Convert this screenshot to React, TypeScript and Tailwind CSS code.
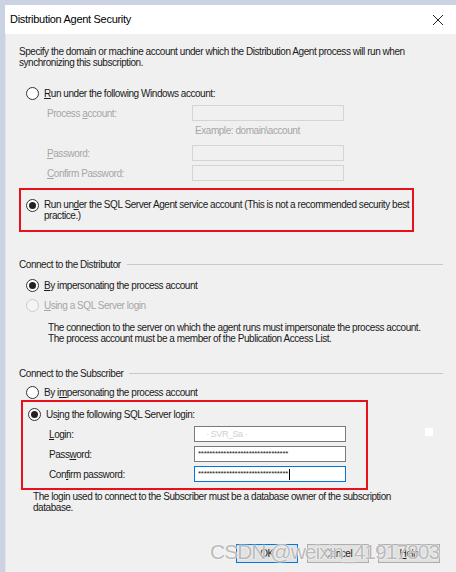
import React from "react";

const Radio = ({ checked = false, disabled = false }: { checked?: boolean; disabled?: boolean }) => (
  <span
    className={`flex h-[13px] w-[13px] shrink-0 items-center justify-center rounded-full border ${
      disabled ? "border-[#cccccc] bg-[#f4f4f4]" : "border-[#333333] bg-white"
    }`}
  >
    {checked && <span className="h-[7px] w-[7px] rounded-full bg-[#222222]" />}
  </span>
);

const RadioRow = ({
  checked,
  disabled,
  children,
}: {
  checked?: boolean;
  disabled?: boolean;
  children: React.ReactNode;
}) => (
  <div className="flex h-[14px] items-center pl-[7px]">
    <Radio checked={checked} disabled={disabled} />
    <span className={`ml-[5px] ${disabled ? "text-[#a6a6a6]" : "text-[#1a1a1a]"}`}>{children}</span>
  </div>
);

const Field = ({
  label,
  disabled,
  focused,
  children,
}: {
  label: React.ReactNode;
  disabled?: boolean;
  focused?: boolean;
  children?: React.ReactNode;
}) => (
  <div className="flex h-[16px] items-center">
    <span className={`w-[173px] pl-[28px] ${disabled ? "text-[#a6a6a6]" : "text-[#1a1a1a]"}`}>{label}</span>
    <div
      className={`flex h-[16px] w-[152px] items-center overflow-hidden border px-[3px] ${
        disabled
          ? "border-[#d4d4d4] bg-[#f0f0f0]"
          : focused
          ? "border-[#0078d7] bg-white"
          : "border-[#7a7a7a] bg-white"
      }`}
    >
      {children}
    </div>
  </div>
);

const Stars = ({ caret }: { caret?: boolean }) => (
  <span className="flex items-center text-[8px] leading-none tracking-[-0.3px] text-[#222]">
    {"*".repeat(32)}
    {caret && <span className="ml-[1px] h-[11px] w-[1px] bg-black" />}
  </span>
);

const Button = ({ children, primary }: { children: React.ReactNode; primary?: boolean }) => (
  <div
    className={`flex h-[19px] w-[62px] items-center justify-center border ${
      primary ? "border-[#0078d7] bg-[#e1e1e1]" : "border-[#adadad] bg-[#e1e1e1]"
    }`}
  >
    {children}
  </div>
);

export default function App() {
  return (
    <div
      className="relative h-[572px] w-[456px] overflow-hidden bg-[#cbd3e3] pl-[5px] pt-[5px] text-[10px] leading-[11px] tracking-[-0.45px] text-[#1a1a1a]"
      style={{ fontFamily: '"Liberation Sans", Arial, sans-serif' }}
    >
      <div className="w-[460px]">
        <div className="flex h-[29px] items-center justify-between bg-white pl-[5px] pr-[21px]">
          <span className="text-[11px] tracking-[-0.3px] text-black">Distribution Agent Security</span>
          <svg width="12" height="12" viewBox="0 0 12 12">
            <path d="M1 1 L11 11 M11 1 L1 11" stroke="#222" strokeWidth="1" />
          </svg>
        </div>
        <div className="h-[540px] border-l border-[#e3e3e3] bg-[#f0f0f0] pl-[13px] pt-[12px]">
          <p className="whitespace-nowrap">
            Specify the domain or machine account under which the Distribution Agent process will run when
            <br />
            synchronizing this subscription.
          </p>

          <div className="mt-[18px]">
            <RadioRow>
              <u>R</u>un under the following Windows account:
            </RadioRow>
          </div>
          <div className="mt-[5px]">
            <Field
              disabled
              label={
                <>
                  Process <u>a</u>ccount:
                </>
              }
            />
          </div>
          <div className="mt-[4px] h-[12px] pl-[176px] text-[#a6a6a6]">Example: domain\account</div>
          <div className="mt-[8px]">
            <Field
              disabled
              label={
                <>
                  <u>P</u>assword:
                </>
              }
            />
          </div>
          <div className="mt-[4px]">
            <Field
              disabled
              label={
                <>
                  <u>C</u>onfirm Password:
                </>
              }
            />
          </div>

          <div className="mt-[7px] h-[44px] w-[395px] border-2 border-[#e8101a] pt-[9px]">
            <div className="flex pl-[5px]">
              <span>
                <Radio checked />
              </span>
              <span className="ml-[5px] whitespace-nowrap">
                Run un<u>d</u>er the SQL Server Agent service account (This is not a recommended security best
                <br />
                practice.)
              </span>
            </div>
          </div>

          <div className="mt-[27px] flex items-center pr-[22px]">
            <span>Connect to the Distributor</span>
            <span className="ml-[6px] h-[1px] flex-1 bg-[#c8c8c8]" />
          </div>
          <div className="mt-[8px]">
            <RadioRow checked>
              <u>B</u>y impersonating the process account
            </RadioRow>
          </div>
          <div className="mt-[6px]">
            <RadioRow disabled>
              <u>U</u>sing a SQL Server login
            </RadioRow>
          </div>
          <p className="mt-[10px] whitespace-nowrap pl-[29px]">
            The connection to the server on which the agent runs must impersonate the process account.
            <br />
            The process account must be a member of the Publication Access List.
          </p>

          <div className="mt-[24px] flex items-center pr-[22px]">
            <span>Connect to the Subscriber</span>
            <span className="ml-[6px] h-[1px] flex-1 bg-[#c8c8c8]" />
          </div>
          <div className="mt-[6px]">
            <RadioRow>
              By i<u>m</u>personating the process account
            </RadioRow>
          </div>

          <div className="mt-[1px] flex items-start">
            <div className="ml-[2px] h-[90px] w-[347px] border-2 border-[#e8101a] pt-[5px]">
              <div className="-ml-[2px]">
                <RadioRow checked>
                  Us<u>i</u>ng the following SQL Server login:
                </RadioRow>
              </div>
              <div className="-ml-[2px] mt-[5px]">
                <Field
                  label={
                    <>
                      <u>L</u>ogin:
                    </>
                  }
                >
                  <span className="text-[9px] text-[#cfcfcf]">&nbsp;&nbsp;&nbsp;&nbsp;· SVR_Sa ·</span>
                </Field>
              </div>
              <div className="-ml-[2px] mt-[4px]">
                <Field
                  label={
                    <>
                      Pass<u>w</u>ord:
                    </>
                  }
                >
                  <Stars />
                </Field>
              </div>
              <div className="-ml-[2px] mt-[4px]">
                <Field
                  focused
                  label={
                    <>
                      Con<u>f</u>irm password:
                    </>
                  }
                >
                  <Stars caret />
                </Field>
              </div>
            </div>
            <span className="ml-[57px] mt-[28px] h-[8px] w-[8px] bg-white" />
          </div>

          <p className="mt-[1px] whitespace-nowrap pl-[14px]">
            The login used to connect to the Subscriber must be a database owner of the subscription
            <br />
            database.
          </p>

          <div className="mt-[31px] flex gap-[9px] pl-[217px]">
            <Button primary>OK</Button>
            <Button>Cancel</Button>
            <Button>
              <u>H</u>elp
            </Button>
          </div>
        </div>
      </div>

      <div
        className="pointer-events-none absolute left-[210px] top-[538px] whitespace-nowrap text-[21px] leading-[28px] tracking-[-1px] text-[#a8a8a8]/80"
        style={{ textShadow: "0 0 1px #ffffff, 0 0 2px #ffffff" }}
      >
        CSDN @weixin_41917803
      </div>
    </div>
  );
}
